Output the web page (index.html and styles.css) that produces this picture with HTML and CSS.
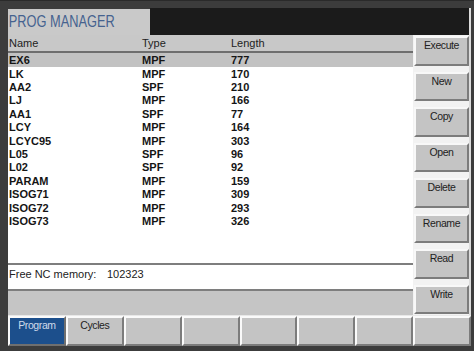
FILE: index.html
```html
<!DOCTYPE html>
<html>
<head>
<meta charset="utf-8">
<link rel="stylesheet" href="styles.css">
</head>
<body>
<div class="frame">
  <div class="titlebar">
    <div class="title"><span class="title-text">PROG MANAGER</span></div>
    <div class="blackbar"></div>
  </div>
  <div class="main">
    <div class="left">
      <div class="colhead">
        <span class="c-name">Name</span><span class="c-type">Type</span><span class="c-len">Length</span>
      </div>
      <div class="list">
        <div class="row sel"><span class="c-name">EX6</span><span class="c-type">MPF</span><span class="c-len">777</span></div>
        <div class="row"><span class="c-name">LK</span><span class="c-type">MPF</span><span class="c-len">170</span></div>
        <div class="row"><span class="c-name">AA2</span><span class="c-type">SPF</span><span class="c-len">210</span></div>
        <div class="row"><span class="c-name">LJ</span><span class="c-type">MPF</span><span class="c-len">166</span></div>
        <div class="row"><span class="c-name">AA1</span><span class="c-type">SPF</span><span class="c-len">77</span></div>
        <div class="row"><span class="c-name">LCY</span><span class="c-type">MPF</span><span class="c-len">164</span></div>
        <div class="row"><span class="c-name">LCYC95</span><span class="c-type">MPF</span><span class="c-len">303</span></div>
        <div class="row"><span class="c-name">L05</span><span class="c-type">SPF</span><span class="c-len">96</span></div>
        <div class="row"><span class="c-name">L02</span><span class="c-type">SPF</span><span class="c-len">92</span></div>
        <div class="row"><span class="c-name">PARAM</span><span class="c-type">MPF</span><span class="c-len">159</span></div>
        <div class="row"><span class="c-name">ISOG71</span><span class="c-type">MPF</span><span class="c-len">309</span></div>
        <div class="row"><span class="c-name">ISOG72</span><span class="c-type">MPF</span><span class="c-len">293</span></div>
        <div class="row"><span class="c-name">ISOG73</span><span class="c-type">MPF</span><span class="c-len">326</span></div>
      </div>
      <div class="memory"><span class="mem-label">Free NC memory:</span><span class="mem-val">102323</span></div>
      <div class="graystrip"></div>
    </div>
    <div class="side">
      <div class="sbtn">Execute</div>
      <div class="sbtn">New</div>
      <div class="sbtn">Copy</div>
      <div class="sbtn">Open</div>
      <div class="sbtn">Delete</div>
      <div class="sbtn">Rename</div>
      <div class="sbtn">Read</div>
      <div class="sbtn">Write</div>
    </div>
  </div>
  <div class="bottombar">
    <div class="bbtn active">Program</div>
    <div class="bbtn">Cycles</div>
    <div class="bbtn"></div>
    <div class="bbtn"></div>
    <div class="bbtn"></div>
    <div class="bbtn"></div>
    <div class="bbtn"></div>
    <div class="bbtn"></div>
  </div>
</div>
</body>
</html>
```
FILE: styles.css
```css
html, body {
  margin: 0;
  padding: 0;
}
body {
  width: 474px;
  height: 351px;
  background: #2c2c2c;
  font-family: "Liberation Sans", Arial, sans-serif;
  font-size: 11px;
  color: #1a1a1a;
  overflow: hidden;
}
.frame {
  width: 474px;
  height: 351px;
  box-sizing: border-box;
  padding: 7px 3px 5px 8px;
  background: #3c3c3c;
  border-top: 1px solid #2a2a2a;
  display: flex;
  flex-direction: column;
  position: relative;
}
.titlebar {
  height: 27px;
  display: flex;
  flex: none;
}
.title {
  width: 142px;
  background: #c9c9c9;
  margin-top: 1px;
  overflow: hidden;
  display: flex;
  align-items: center;
}
.title-text {
  display: inline-block;
  font-size: 16px;
  color: #45628f;
  white-space: nowrap;
  transform: scaleX(0.8);
  transform-origin: left center;
  padding-left: 1px;
}
.blackbar {
  flex: 1;
  background: #1b1b1b;
  border-right: 2px solid #dcdcdc;
}
.main {
  display: flex;
  height: 280px;
  flex: none;
}
.left {
  width: 405px;
  display: flex;
  flex-direction: column;
  background: #fff;
}
.colhead {
  height: 16px;
  background: #c8c8c8;
  border-bottom: 2px solid #6e6e6e;
  display: flex;
  align-items: center;
  color: #222;
  flex: none;
}
.c-name {
  width: 134px;
  padding-left: 1px;
  box-sizing: border-box;
}
.c-type {
  width: 89px;
}
.c-len {
  flex: 1;
}
.list {
  height: 210px;
  flex: none;
  background: #fff;
  font-weight: bold;
  color: #151515;
  border-bottom: 2px solid #7e7e7e;
}
.row {
  height: 13.4px;
  display: flex;
  align-items: center;
}
.row.sel {
  background: #c2c2c2;
  height: 14px;
}
.memory {
  height: 26px;
  flex: none;
  display: flex;
  align-items: center;
  padding-bottom: 6px;
  box-sizing: border-box;
  border-bottom: 2px solid #7e7e7e;
  color: #222;
}
.mem-label {
  width: 99px;
  padding-left: 1px;
  box-sizing: border-box;
}
.graystrip {
  flex: 1;
  background: #c5c5c5;
}
.side {
  flex: 1;
  background: #f2f2f2;
  display: flex;
  flex-direction: column;
  gap: 6px;
  padding: 1px 0 1px 1px;
  border-right: 2px solid #dcdcdc;
}
.sbtn {
  height: 29.5px;
  box-sizing: border-box;
  background: #c4c4c4;
  border: 2px solid;
  border-color: #f8f8f8 #7c7c7c #7c7c7c #f8f8f8;
  text-align: center;
  padding-top: 1px;
  color: #222;
  line-height: 13px;
  font-size: 10.5px;
  letter-spacing: -0.4px;
}
.bottombar {
  flex: 1;
  display: grid;
  grid-template-columns: repeat(8, 1fr);
  background: #e8e8e8;
  padding-top: 1px;
}
.bbtn {
  box-sizing: border-box;
  background: #c4c4c4;
  border: 2px solid;
  border-color: #fafafa #7c7c7c #7c7c7c #fafafa;
  text-align: center;
  padding-top: 1px;
  line-height: 13px;
  color: #222;
  font-size: 10.5px;
  letter-spacing: -0.4px;
}
.bbtn.active {
  background: #1c4f8c;
  color: #cfdaea;
  border-color: #fafafa #6f6f6f #6f6f6f #fafafa;
}
```
